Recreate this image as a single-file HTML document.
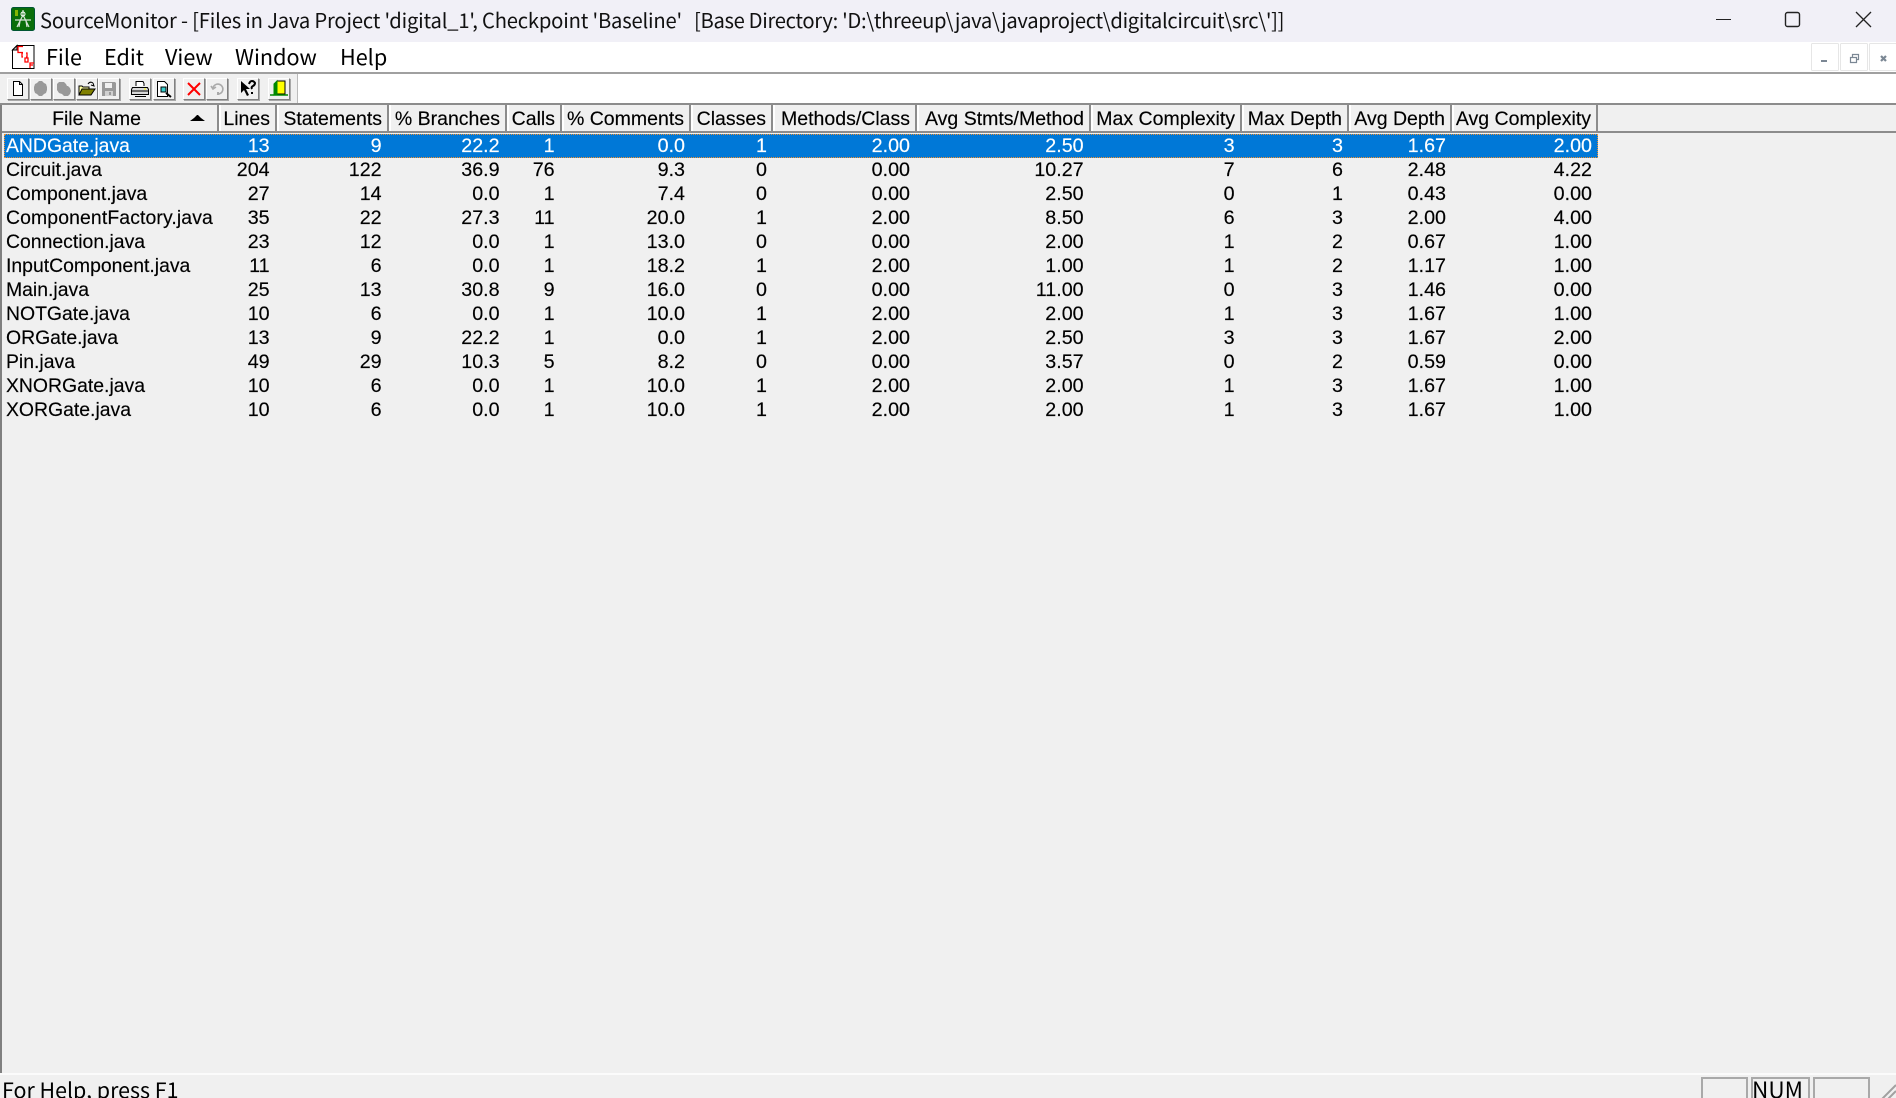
<!DOCTYPE html>
<html>
<head>
<meta charset="utf-8">
<title>SourceMonitor</title>
<style>
html,body{margin:0;padding:0;width:1896px;height:1098px;overflow:hidden;background:#f0f0f0}
body{position:relative;font-family:"Liberation Sans",Arial,sans-serif;color:#000}
.a{position:absolute;white-space:nowrap}
.ui{font-family:"Noto Sans CJK SC","Liberation Sans",sans-serif}
#title{left:0;top:0;width:1896px;height:42px;background:#f1f0f7}
#menu{left:0;top:42px;width:1896px;height:31px;background:#fff}
.m{font-size:21.6px;line-height:30px;top:42px}
#l1{left:0;top:72px;width:1896px;height:2px;background:#a0a0a0}
#tb{left:297px;top:74px;width:1599px;height:29px;background:#fff;border-left:1px solid #bbb}
#l2{left:0;top:103px;width:1896px;height:2px;background:#8c8c8c}
.b{position:absolute;top:78px;width:22px;height:22px;background:#f0f0f0;box-sizing:border-box;border:1px solid;border-color:#fff #808080 #808080 #fff;box-shadow:1px 1px 0 #a8a8a8}
.b svg{position:absolute;left:0;top:0}
#hdr{left:0;top:105px;height:26px;width:1896px;background:#f0f0f0}
.h{position:absolute;top:105px;height:26px;box-sizing:border-box;border-right:2px solid #8c8c8c;border-left:2px solid #fff;font-size:19.5px;line-height:29px;text-align:right;padding-right:5px;background:#f0f0f0;-webkit-text-stroke:.15px #000}
#sel{left:4px;top:134px;width:1594px;height:24px;background:#0078d7;outline:1px dotted #f09030;outline-offset:-1px}
table{position:absolute;left:0;top:134px;border-collapse:collapse;table-layout:fixed;width:1597px;font-size:19.7px;-webkit-text-stroke:.15px}
td{padding:0 7.400px 0 0;height:24px;line-height:24px;text-align:right;white-space:nowrap;overflow:hidden}
td:first-child{text-align:left;padding-left:6px;padding-right:0;font-size:19.4px}
td:nth-child(6),td:nth-child(11),td:nth-child(12){padding-right:6px}
td:nth-child(7){padding-right:6px}
td:nth-child(8){padding-right:7px}
td:nth-child(13){padding-right:5px}
tr.s td{color:#fff}
#lft{left:0;top:105px;width:2px;height:968px;background:#808080}
#st{left:0;top:1073px;width:1896px;height:25px;background:#f0f0f0;border-top:2px solid #fbfbfb;overflow:hidden}
.sb{position:absolute;top:1077px;height:30px;box-sizing:border-box;border:2px solid #a9a9a9;border-bottom:0}
</style>
</head>
<body>
<div class="a" id="title"></div>
<svg class="a" style="left:11px;top:7px" width="24" height="24" viewBox="0 0 24 24"><rect x=".5" y=".5" width="23" height="23" rx="2" fill="#0a6e0a" stroke="#053"/><path d="M12 3v5M12 8L6 20M12 8l6 12M4 13h16M9 14l-1 6M15 14l1 6" stroke="#d8e4d8" stroke-width="1.200" fill="none"/><circle cx="12" cy="7" r="2" fill="none" stroke="#fff"/><path d="M4 4h3M4 6h3M4 8h3" stroke="#ff0"/></svg>
<div class="a ui" style="left:40px;top:4px;font-size:20.200px;letter-spacing:-.18px;line-height:31px;color:#111">SourceMonitor - [Files in Java Project 'digital_1', Checkpoint 'Baseline'</div>
<div class="a ui" style="left:694px;top:4px;font-size:20.200px;letter-spacing:-.32px;line-height:31px;color:#111">[Base Directory: 'D:\threeup\java\javaproject\digitalcircuit\src\']]</div>
<svg class="a" style="left:1700px;top:0" width="196" height="42" viewBox="0 0 196 42"><path d="M16 19.500h15" stroke="#222" fill="none"/><rect x="85.500" y="12.500" width="14" height="14" rx="2" stroke="#222" stroke-width="1.400" fill="none"/><path d="M156 12l15 15M171 12l-15 15" stroke="#222" stroke-width="1.300" fill="none"/></svg>

<div class="a" id="menu"></div>
<svg class="a" style="left:11px;top:44px" width="26" height="26" viewBox="0 0 26 26"><path d="M6 1.500h17v23H1.500V6z" fill="#fff" stroke="#000"/><path d="M1.500 6H6V1.500z" fill="#bbb" stroke="#000"/><g fill="none" stroke="#f00" stroke-width="1.300"><path d="M12 2.500H7v6h5M12 9h-1v4h1M15 9h1v4h-1M14 14h3v4h-3zM23 19h-4v5M19 21h3"/></g></svg>
<div class="a ui m" style="left:46px">File</div>
<div class="a ui m" style="left:104px">Edit</div>
<div class="a ui m" style="left:165px">View</div>
<div class="a ui m" style="left:235px">Window</div>
<div class="a ui m" style="left:340px">Help</div>
<svg class="a" style="left:1810px;top:42px" width="86" height="30" viewBox="0 0 86 30"><g fill="#fff" stroke="#e6e6e6"><rect x="1.500" y="1.500" width="27" height="27" rx="1"/><rect x="30.500" y="1.500" width="27" height="27" rx="1"/><rect x="59.500" y="1.500" width="27" height="27" rx="1"/></g><path d="M11 18h6v2h-6z" fill="#7b8794"/><path d="M40.500 15.500h6v5h-6zM42.500 15v-2.500h6v5H47" fill="none" stroke="#7b8794" stroke-width="1.200"/><path d="M71 14l5 5m0-5l-5 5" stroke="#7b8794" stroke-width="2.200" fill="none"/></svg>
<div class="a" id="l1"></div>
<div class="a" id="tb"></div>
<div class="a" id="l2"></div>

<div class="b" style="left:7px"><svg width="20" height="20"><path d="M5.500 2.500h6l3 3v11h-9z" fill="#fff" stroke="#000"/><path d="M11.500 2.500v3h3" fill="none" stroke="#000"/></svg></div>
<div class="b" style="left:30px"><svg width="20" height="20"><path d="M8 2l3 0 2 2 2 1 1 3v3l-1 3-2 1-2 2H8l-2-2-2-1-1-3V8l1-3 2-1z" fill="#999"/></svg></div>
<div class="b" style="left:53px"><svg width="20" height="20"><path d="M5 3h5l2 2 1 2h1l2 2 1 3-1 3-2 2h-4l-2-2-3-1-2-3V5z" fill="#999"/></svg></div>
<div class="b" style="left:76px"><svg width="20" height="20"><path d="M2 7h3l1 1h6v8H2z" fill="#ffffa0" stroke="#000"/><path d="M2 16l3-6h13l-4 6z" fill="#808000" stroke="#000"/><path d="M11 5q2-3 5-1M16 4l1 3-3-1" fill="none" stroke="#000"/></svg></div>
<div class="b" style="left:98px"><svg width="20" height="20"><path d="M3 3h13l1 1v13H3z" fill="#999"/><path d="M6 4h7v5H6z" fill="#f0f0f0"/><path d="M6 12h8v5H6z" fill="#d0d0d0"/><path d="M10 13h2v3h-2z" fill="#999"/></svg></div>
<div class="b" style="left:129px"><svg width="20" height="20"><path d="M6 7V2.500h7l1 2V7" fill="#fff" stroke="#000"/><path d="M2.500 8.500h15l1 2v5h-17v-5z" fill="#d8d8d8" stroke="#000"/><path d="M2 12h16M3 15.500h14M5 17.500h11" stroke="#000"/><path d="M14 10h2" stroke="#ff0"/></svg></div>
<div class="b" style="left:153px"><svg width="20" height="20"><path d="M3.500 2.500h7l3 3v12h-10z" fill="#fff" stroke="#000"/><rect x="7" y="8" width="5" height="5" fill="#3cc" stroke="#000"/><path d="M12 14l5 4" stroke="#000" stroke-width="2"/></svg></div>
<div class="b" style="left:183px"><svg width="20" height="20"><path d="M4 4l12 12M16 4L4 16" stroke="#f00" stroke-width="2" fill="none"/></svg></div>
<div class="b" style="left:206px"><svg width="20" height="20"><path d="M6 9a5 5 0 1 1 4 6M4 7l2 3 3-2" fill="none" stroke="#aaa" stroke-width="1.600"/><path d="M10 13h2v3h-2z" fill="#aaa"/></svg></div>
<div class="b" style="left:237px"><svg width="20" height="20"><path d="M3 2v12l3-3 3 6 2-1-3-6h4z" fill="#000"/><path d="M11 5q1-3 3-3t3 2q0 2-2 3t-1 3M14 13v2" fill="none" stroke="#000" stroke-width="2"/></svg></div>
<div class="b" style="left:268px"><svg width="20" height="20"><path d="M8 2h8v13H8z" fill="#ff0" stroke="#000"/><path d="M8 2L5 5v11l3-1z" fill="#080" stroke="#080"/><path d="M1 16h18" stroke="#080" stroke-width="1.500"/></svg></div>

<div class="a" id="hdr"></div>
<div class="h" style="left:0;width:219px;text-align:center;padding:0 24px 0 0;border-left:0">File Name</div>
<svg class="a" style="left:189px;top:114px" width="17" height="8"><path d="M1 7h15l-4-3-3-3H8L5 4z" fill="#000"/></svg>
<div class="h" style="left:219px;width:58px">Lines</div>
<div class="h" style="left:277px;width:112px">Statements</div>
<div class="h" style="left:389px;width:118px">% Branches</div>
<div class="h" style="left:507px;width:55px">Calls</div>
<div class="h" style="left:562px;width:129px">% Comments</div>
<div class="h" style="left:691px;width:82px">Classes</div>
<div class="h" style="left:773px;width:144px">Methods/Class</div>
<div class="h" style="left:917px;width:174px">Avg Stmts/Method</div>
<div class="h" style="left:1091px;width:151px">Max Complexity</div>
<div class="h" style="left:1242px;width:107px">Max Depth</div>
<div class="h" style="left:1349px;width:103px">Avg Depth</div>
<div class="h" style="left:1452px;width:146px">Avg Complexity</div>
<div class="a" style="left:0;top:131px;width:1896px;height:2px;background:#8c8c8c"></div>

<div class="a" id="lft"></div>
<div class="a" id="sel"></div>
<table>
<colgroup><col style="width:219px"><col style="width:58px"><col style="width:112px"><col style="width:118px"><col style="width:55px"><col style="width:129px"><col style="width:82px"><col style="width:144px"><col style="width:174px"><col style="width:151px"><col style="width:107px"><col style="width:103px"><col style="width:145px"></colgroup>
<tr class="s"><td>ANDGate.java</td><td>13</td><td>9</td><td>22.2</td><td>1</td><td>0.0</td><td>1</td><td>2.00</td><td>2.50</td><td>3</td><td>3</td><td>1.67</td><td>2.00</td></tr>
<tr><td>Circuit.java</td><td>204</td><td>122</td><td>36.9</td><td>76</td><td>9.3</td><td>0</td><td>0.00</td><td>10.27</td><td>7</td><td>6</td><td>2.48</td><td>4.22</td></tr>
<tr><td>Component.java</td><td>27</td><td>14</td><td>0.0</td><td>1</td><td>7.4</td><td>0</td><td>0.00</td><td>2.50</td><td>0</td><td>1</td><td>0.43</td><td>0.00</td></tr>
<tr><td style="letter-spacing:.12px">ComponentFactory.java</td><td>35</td><td>22</td><td>27.3</td><td>11</td><td>20.0</td><td>1</td><td>2.00</td><td>8.50</td><td>6</td><td>3</td><td>2.00</td><td>4.00</td></tr>
<tr><td>Connection.java</td><td>23</td><td>12</td><td>0.0</td><td>1</td><td>13.0</td><td>0</td><td>0.00</td><td>2.00</td><td>1</td><td>2</td><td>0.67</td><td>1.00</td></tr>
<tr><td>InputComponent.java</td><td>11</td><td>6</td><td>0.0</td><td>1</td><td>18.2</td><td>1</td><td>2.00</td><td>1.00</td><td>1</td><td>2</td><td>1.17</td><td>1.00</td></tr>
<tr><td>Main.java</td><td>25</td><td>13</td><td>30.8</td><td>9</td><td>16.0</td><td>0</td><td>0.00</td><td>11.00</td><td>0</td><td>3</td><td>1.46</td><td>0.00</td></tr>
<tr><td>NOTGate.java</td><td>10</td><td>6</td><td>0.0</td><td>1</td><td>10.0</td><td>1</td><td>2.00</td><td>2.00</td><td>1</td><td>3</td><td>1.67</td><td>1.00</td></tr>
<tr><td>ORGate.java</td><td>13</td><td>9</td><td>22.2</td><td>1</td><td>0.0</td><td>1</td><td>2.00</td><td>2.50</td><td>3</td><td>3</td><td>1.67</td><td>2.00</td></tr>
<tr><td>Pin.java</td><td>49</td><td>29</td><td>10.3</td><td>5</td><td>8.2</td><td>0</td><td>0.00</td><td>3.57</td><td>0</td><td>2</td><td>0.59</td><td>0.00</td></tr>
<tr><td>XNORGate.java</td><td>10</td><td>6</td><td>0.0</td><td>1</td><td>10.0</td><td>1</td><td>2.00</td><td>2.00</td><td>1</td><td>3</td><td>1.67</td><td>1.00</td></tr>
<tr><td>XORGate.java</td><td>10</td><td>6</td><td>0.0</td><td>1</td><td>10.0</td><td>1</td><td>2.00</td><td>2.00</td><td>1</td><td>3</td><td>1.67</td><td>1.00</td></tr>
</table>

<div class="a" id="st"></div>
<div class="a ui" style="left:2px;top:1075px;font-size:21.4px;line-height:30px">For Help, press F1</div>
<div class="sb" style="left:1701px;width:47px"></div>
<div class="sb" style="left:1751px;width:59px"></div>
<div class="a ui" style="left:1752px;top:1074px;font-size:22.6px;line-height:30px">NUM</div>
<div class="sb" style="left:1813px;width:57px"></div>
<svg class="a" style="left:1880px;top:1084px" width="16" height="14"><path d="M2 15L16 1M8 15L16 7" stroke="#a0a0a0" stroke-width="2" fill="none"/></svg>
</body>
</html>
